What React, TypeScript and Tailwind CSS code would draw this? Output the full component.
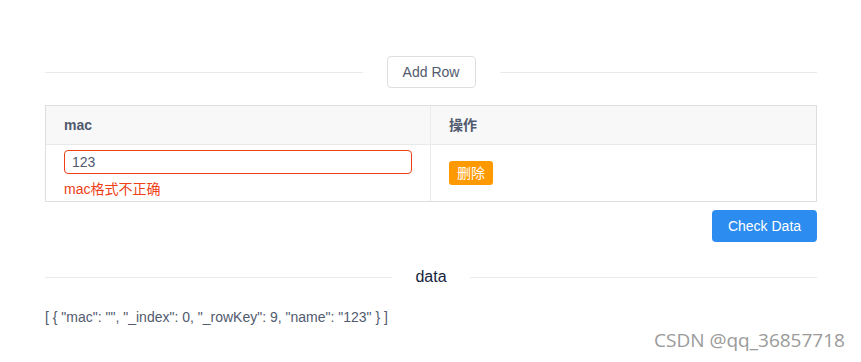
export default function App() {
  const font = { fontFamily: '"Liberation Sans", Arial, "Noto Sans CJK SC", sans-serif' };
  return (
    <div className="w-[861px] h-[362px] bg-white relative overflow-hidden" style={font}>
      <div className="pl-[45px] pr-[44px] pt-[56px]">
        {/* Add Row divider */}
        <div className="flex items-center h-[32px]">
          <div className="flex-1 h-px bg-[#e8eaec]" />
          <div className="px-[24px]">
            <button className="h-[32px] w-[89px] border border-[#dcdee2] rounded-[4px] bg-white text-[14px] text-[#515a6e]">
              Add Row
            </button>
          </div>
          <div className="flex-1 h-px bg-[#e8eaec]" />
        </div>

        {/* Table */}
        <div className="mt-[17px] border border-[#dcdee2] text-[14px] text-[#515a6e]">
          <div className="grid grid-cols-[385px_1fr] bg-[#f8f8f9] h-[39px] border-b border-[#e8eaec]">
            <div className="pl-[18px] flex items-center font-bold border-r border-[#e8eaec]">mac</div>
            <div className="pl-[18px] flex items-center font-bold">操作</div>
          </div>
          <div className="grid grid-cols-[385px_1fr] h-[56px]">
            <div className="pl-[18px] pr-[18px] pt-[5px] border-r border-[#e8eaec]">
              <div className="h-[24px] border border-[#ed4014] rounded-[4px] flex items-center pl-[7px] text-[14px] text-[#515a6e]">
                123
              </div>
              <div className="mt-[5px] leading-[20px] text-[14px] text-[#ed4014]">mac格式不正确</div>
            </div>
            <div className="pl-[18px] flex items-center">
              <button className="h-[24px] px-[8px] rounded-[3px] bg-[#ff9900] text-white text-[14px] leading-[24px]">
                删除
              </button>
            </div>
          </div>
        </div>

        <div className="flex justify-end mt-[8px]">
          <button className="h-[32px] w-[105px] rounded-[4px] bg-[#2d8cf0] text-white text-[14px]">Check Data</button>
        </div>

        {/* data divider */}
        <div className="flex items-center h-[24px] mt-[23px]">
          <div className="flex-1 h-px bg-[#e8eaec]" />
          <div className="px-[23px] text-[16px] text-[#17233d]">data</div>
          <div className="flex-1 h-px bg-[#e8eaec]" />
        </div>

        <div className="mt-[18px] text-[14px] text-[#515a6e] leading-[20px]">
          {'[ { "mac": "", "_index": 0, "_rowKey": 9, "name": "123" } ]'}
        </div>
      </div>

      <div
        className="absolute left-[654px] top-[327px] text-[19px] text-[#9a9a9a] leading-[26px]"
        style={{ fontFamily: '"Open Sans", "Noto Sans", sans-serif', textShadow: '0 0 1px rgba(255,255,255,0.8)' }}
      >
        CSDN @qq_36857718
      </div>
    </div>
  );
}
